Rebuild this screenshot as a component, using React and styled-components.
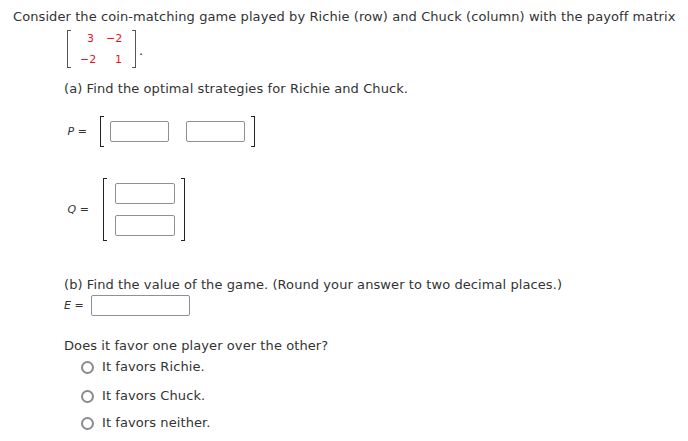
import React from "react";
import styled, { createGlobalStyle } from "styled-components";

const Global = createGlobalStyle`
  html, body { margin: 0; padding: 0; background: #fff; }
  body { font-family: "DejaVu Sans", Verdana, sans-serif; color: #333; }
`;

const Page = styled.div`
  width: 688px;
  height: 441px;
  box-sizing: border-box;
  padding: 8px 0 0 13px;
  font-size: 13px;
  line-height: 18px;
  letter-spacing: 0.085px;
  overflow: hidden;
`;

const Line = styled.div`
  margin-left: ${(p) => p.$indent || 0}px;
  margin-top: ${(p) => p.$top || 0}px;
  white-space: nowrap;
`;

const MatrixWrap = styled.div`
  display: flex;
  align-items: center;
  margin-left: 54px;
  margin-top: 2px;
`;

const Bracket = styled.div`
  width: 4px;
  height: ${(p) => p.$h}px;
  box-sizing: border-box;
  border: ${(p) => p.$w || 1.5}px solid ${(p) => p.$c || "#555"};
  ${(p) => (p.$right ? "border-left: none;" : "border-right: none;")}
`;

const MatrixGrid = styled.div`
  display: grid;
  grid-template-columns: 14px 16px;
  column-gap: 12px;
  padding: 0 10px 0 9px;
  font-size: 11px;
  line-height: 21px;
  letter-spacing: 0;
  color: #e8141b;
  text-align: right;
`;

const Period = styled.span`
  font-size: 13px;
  margin-left: 3px;
  margin-top: 4px;
`;

const MathRow = styled.div`
  display: flex;
  align-items: center;
  margin-left: ${(p) => p.$indent || 51}px;
  margin-top: ${(p) => p.$top || 0}px;
`;

const Label = styled.div`
  width: ${(p) => p.$w}px;
  font-size: 11px;
  letter-spacing: 0;
  color: #333;
  white-space: nowrap;
  i { font-style: italic; }
`;

const Box = styled.div`
  width: ${(p) => p.$w}px;
  height: ${(p) => p.$h || 21}px;
  box-sizing: border-box;
  border: 1px solid #8f8f95;
  border-radius: 2px;
  background: #fff;
`;

const RowBoxes = styled.div`
  display: flex;
  gap: 17px;
  padding: 0 6px;
`;

const ColBoxes = styled.div`
  display: flex;
  flex-direction: column;
  gap: 11px;
  padding: 0 6px 0 8px;
`;

const Radios = styled.div`
  margin-left: 68px;
  display: flex;
  flex-direction: column;
`;

const RadioRow = styled.label`
  display: flex;
  align-items: center;
  height: 18px;
  margin-top: ${(p) => p.$top}px;
`;

const Circle = styled.span`
  width: 13px;
  height: 13px;
  box-sizing: border-box;
  border: 2px solid #8a8a8e;
  border-radius: 50%;
  margin-right: 8px;
`;

export default function App() {
  return (
    <>
      <Global />
      <Page>
        <Line>
          Consider the coin-matching game played by Richie (row) and Chuck (column) with the payoff matrix
        </Line>
        <MatrixWrap>
          <Bracket $h={38} />
          <MatrixGrid>
            <span>3</span>
            <span>−2</span>
            <span>−2</span>
            <span>1</span>
          </MatrixGrid>
          <Bracket $h={38} $right />
          <Period>.</Period>
        </MatrixWrap>
        <Line $indent={51} $top={10}>(a) Find the optimal strategies for Richie and Chuck.</Line>

        <MathRow $top={18}>
          <Label $w={36}>&nbsp;<i>P</i> =</Label>
          <Bracket $h={31} $c="#222" $w={1.5} />
          <RowBoxes>
            <Box $w={59} />
            <Box $w={59} />
          </RowBoxes>
          <Bracket $h={31} $c="#222" $w={1.5} $right />
        </MathRow>

        <MathRow $top={31}>
          <Label $w={39}>&nbsp;<i>Q</i> =</Label>
          <Bracket $h={63} $c="#222" $w={1.5} />
          <ColBoxes>
            <Box $w={60} />
            <Box $w={60} />
          </ColBoxes>
          <Bracket $h={63} $c="#222" $w={1.5} $right />
        </MathRow>

        <Line $indent={51} $top={35}>
          (b) Find the value of the game. (Round your answer to two decimal places.)
        </Line>
        <MathRow $top={1}>
          <Label $w={27}>
            <i>E</i> =
          </Label>
          <Box $w={99} />
        </MathRow>

        <Line $indent={51} $top={21}>Does it favor one player over the other?</Line>
        <Radios>
          <RadioRow $top={3}>
            <Circle />
            It favors Richie.
          </RadioRow>
          <RadioRow $top={11}>
            <Circle />
            It favors Chuck.
          </RadioRow>
          <RadioRow $top={9}>
            <Circle />
            It favors neither.
          </RadioRow>
        </Radios>
      </Page>
    </>
  );
}
